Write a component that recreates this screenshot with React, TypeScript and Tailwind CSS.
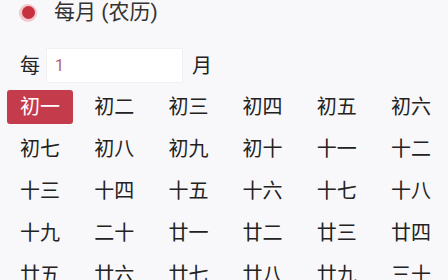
import React, { useState } from 'react'

const DAYS = [
  '初一', '初二', '初三', '初四', '初五', '初六',
  '初七', '初八', '初九', '初十', '十一', '十二',
  '十三', '十四', '十五', '十六', '十七', '十八',
  '十九', '二十', '廿一', '廿二', '廿三', '廿四',
  '廿五', '廿六', '廿七', '廿八', '廿九', '三十'
]

export default function App(): React.ReactElement {
  const [selected, setSelected] = useState(0)
  const [interval, setInterval] = useState('1')

  return (
    <div
      className="w-[448px] h-[280px] overflow-hidden bg-[#f8f7f9] text-[#222]"
      style={{ fontFamily: 'Roboto, "Noto Sans CJK SC", sans-serif' }}
    >
      {/* Lunar monthly option */}
      <div className="flex items-center h-[25px] pl-[19px]">
        <div className="flex items-center justify-center w-[18px] h-[18px] rounded-full bg-[#f1c8cd]">
          <div className="w-[13px] h-[13px] rounded-full bg-[#c6303f]" />
        </div>
        <span className="ml-[17px] text-[21px] leading-none text-[#333]">每月 (农历)</span>
      </div>

      {/* Interval */}
      <div className="flex items-center h-[35px] mt-[23px]">
        <span className="ml-[20px] text-[20px] leading-none">每</span>
        <input
          className="ml-[6px] w-[137px] h-[35px] bg-white px-[8px] text-[16px] text-[#b5606a] outline-none border border-[#f1f0f2]"
          value={interval}
          onChange={(e) => setInterval(e.target.value)}
        />
        <span className="ml-[9px] text-[20px] leading-none">月</span>
      </div>

      {/* Days */}
      <div className="grid grid-cols-6 ml-[3px] w-[445px] mt-[3px]">
        {DAYS.map((d, i) => (
          <div key={d} className="h-[42px] px-[4px] py-[4px]">
            <button
              onClick={() => setSelected(i)}
              className={
                i === selected
                  ? 'w-full h-full rounded-[3px] bg-[#c43c4c] text-white text-[20px] leading-none'
                  : 'w-full h-full rounded-[3px] text-[20px] leading-none text-[#222]'
              }
            >
              {d}
            </button>
          </div>
        ))}
      </div>
    </div>
  )
}
